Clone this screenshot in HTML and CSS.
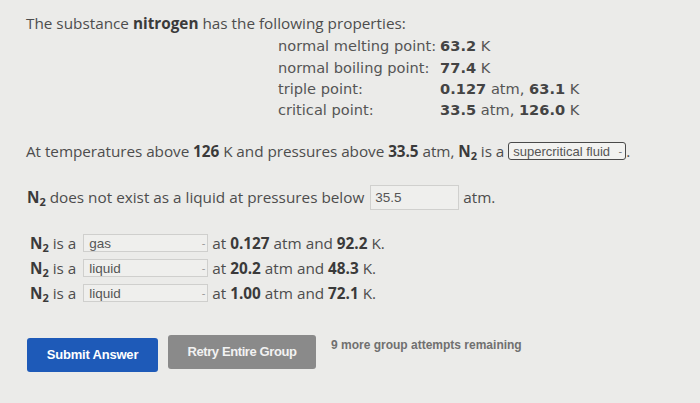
FILE: index.html
```html
<!DOCTYPE html>
<html>
<head>
<meta charset="utf-8">
<link rel="stylesheet" href="styles.css">
</head>
<body>
<div class="page">
  <p class="intro">The substance <b>nitrogen</b> has the following properties:</p>
  <table class="props">
    <tr><td class="lbl">normal melting point:</td><td class="val"><b>63.2</b> K</td></tr>
    <tr><td class="lbl">normal boiling point:</td><td class="val"><b>77.4</b> K</td></tr>
    <tr><td class="lbl">triple point:</td><td class="val"><b>0.127</b> atm, <b>63.1</b> K</td></tr>
    <tr><td class="lbl">critical point:</td><td class="val"><b>33.5</b> atm, <b>126.0</b> K</td></tr>
  </table>
  <p class="q q1">At temperatures above <b>126</b> K and pressures above <b>33.5</b> atm, <b class="n2">N<sub>2</sub></b> is a <span class="sel sel-dark"><span class="sel-text">supercritical fluid</span><span class="arrow">-</span></span>.</p>
  <p class="q q2"><b class="n2">N<sub>2</sub></b> does not exist as a liquid at pressures below <span class="inp">35.5</span> atm.</p>
  <div class="rows">
    <div class="row"><b class="n2">N<sub>2</sub></b>&nbsp;is a <span class="sel sel-light"><span class="sel-text">gas</span><span class="arrow">-</span></span> at <b>0.127</b> atm and <b>92.2</b> K.</div>
    <div class="row"><b class="n2">N<sub>2</sub></b>&nbsp;is a <span class="sel sel-light"><span class="sel-text">liquid</span><span class="arrow">-</span></span> at <b>20.2</b> atm and <b>48.3</b> K.</div>
    <div class="row"><b class="n2">N<sub>2</sub></b>&nbsp;is a <span class="sel sel-light"><span class="sel-text">liquid</span><span class="arrow">-</span></span> at <b>1.00</b> atm and <b>72.1</b> K.</div>
  </div>
  <div class="actions">
    <button class="btn btn-submit">Submit Answer</button>
    <button class="btn btn-retry">Retry Entire Group</button>
    <span class="remaining">9 more group attempts remaining</span>
  </div>
</div>
</body>
</html>
```

FILE: styles.css
```css
html, body {
  margin: 0;
  padding: 0;
  background: #ebebe9;
}
.page {
  padding: 13px 0 0 26px;
  font-family: "Open Sans", "Liberation Sans", sans-serif;
  font-size: 15.3px;
  color: #4d4d4d;
}
p { margin: 0; }
b { color: #3a3a3a; font-weight: 700; }
.intro {
  line-height: 21px;
  height: 21px;
}
.props {
  margin: 1px 0 0 252px;
  border-collapse: collapse;
  font-family: "DejaVu Sans", Verdana, sans-serif;
  font-size: 14.6px;
  color: #555;
}
.props td {
  padding: 0;
  height: 21.4px;
  line-height: 21px;
  white-space: nowrap;
}
.props .lbl { padding-right: 4px; }
.props b { color: #444; }
.q1 {
  margin-top: 20px;
  line-height: 21px;
  display: flex;
  align-items: center;
  white-space: pre;
  letter-spacing: -0.05px;
}
.n2 sub {
  font-size: 11px;
  vertical-align: -3px;
  line-height: 0;
}
.sel {
  display: inline-flex;
  align-items: center;
  box-sizing: border-box;
  font-family: "Liberation Sans", Arial, sans-serif;
  font-size: 13px;
  color: #555;
  letter-spacing: 0;
}
.sel-dark {
  width: 118px;
  height: 18px;
  border: 1px solid #4a4a4a;
  border-radius: 3px;
  padding: 0 3px 0 4px;
  margin-left: 0;
  background: #f2f2f0;
}
.sel-light {
  width: 125px;
  height: 18px;
  border: 1px solid #cfcfcd;
  padding: 0 2px 0 5px;
  background: #efefed;
  margin: 0 0 0 3px;
  font-size: 13.5px;
}
.sel-text { flex: 1; }
.arrow { color: #999; font-size: 11px; }
.sel-dark .arrow { color: #777; }
.q2 {
  margin-top: 23px;
  display: flex;
  align-items: center;
  white-space: pre;
  padding-left: 1px;
}
.inp {
  display: inline-flex;
  align-items: center;
  box-sizing: border-box;
  width: 89px;
  height: 25px;
  border: 1px solid #d0d0ce;
  background: #efefed;
  padding-left: 4px;
  margin: 0 0 0 2px;
  font-family: "Liberation Sans", Arial, sans-serif;
  font-size: 13.5px;
  color: #555;
}
.rows {
  margin-top: 21px;
  padding-left: 4px;
}
.row {
  height: 25px;
  display: flex;
  align-items: center;
  white-space: pre;
}
.actions {
  margin-top: 29px;
  display: flex;
  align-items: center;
  padding-left: 1px;
}
.btn {
  font-family: "Liberation Sans", Arial, sans-serif;
  font-weight: 700;
  font-size: 13px;
  color: #fff;
  border: none;
  border-radius: 3px;
  height: 34px;
  padding: 0;
  letter-spacing: -0.2px;
}
.btn-submit {
  width: 131px;
  background: #1e5ab8;
  margin-top: 3px;
}
.btn-retry {
  width: 148px;
  background: #8a8a8a;
  color: #f2f2f2;
  margin-left: 10px;
  margin-top: -3px;
  letter-spacing: -0.4px;
}
.remaining {
  margin-left: 15px;
  margin-top: -16px;
  font-family: "Liberation Sans", Arial, sans-serif;
  font-weight: 700;
  font-size: 12px;
  color: #707070;
}
```
